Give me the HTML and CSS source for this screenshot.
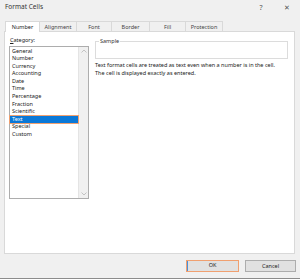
FILE: index.html
```html
<!DOCTYPE html>
<html>
<head>
<meta charset="utf-8">
<link rel="stylesheet" href="styles.css">
</head>
<body>
<div class="dialog">
  <div class="titlebar">
    <span class="title">Format Cells</span>
    <span class="tb-btns"><span class="help">?</span><span class="close">✕</span></span>
  </div>
  <div class="tabs">
    <div class="tab active">Number</div>
    <div class="tab w37">Alignment</div>
    <div class="tab w35">Font</div>
    <div class="tab w38">Border</div>
    <div class="tab w36">Fill</div>
    <div class="tab w37">Protection</div>
  </div>
  <div class="panel">
    <div class="left">
      <div class="label"><u>C</u>ategory:</div>
      <div class="listbox">
        <div class="items">
          <div class="item">General</div>
          <div class="item">Number</div>
          <div class="item">Currency</div>
          <div class="item">Accounting</div>
          <div class="item">Date</div>
          <div class="item">Time</div>
          <div class="item">Percentage</div>
          <div class="item">Fraction</div>
          <div class="item">Scientific</div>
          <div class="item selected">Text</div>
          <div class="item">Special</div>
          <div class="item">Custom</div>
        </div>
        <div class="scrollbar">
          <svg class="arrow" width="6" height="4" viewBox="0 0 6 4"><path d="M0.5 3.5 L3 1 L5.5 3.5" fill="none" stroke="#b8b8b8" stroke-width="0.8"/></svg>
          <svg class="arrow" width="6" height="4" viewBox="0 0 6 4"><path d="M0.5 0.5 L3 3 L5.5 0.5" fill="none" stroke="#b8b8b8" stroke-width="0.8"/></svg>
        </div>
      </div>
    </div>
    <div class="right">
      <div class="sample"><span class="legend">Sample</span></div>
      <p class="desc">Text format cells are treated as text even when a number is in the cell.<br>The cell is displayed exactly as entered.</p>
    </div>
  </div>
  <div class="footer">
    <div class="btn ok">OK</div>
    <div class="btn cancel">Cancel</div>
  </div>
</div>
</body>
</html>
```
FILE: styles.css
```css
html, body {
  margin: 0;
  padding: 0;
}
body {
  width: 300px;
  height: 279px;
  background: #f0f0f0;
  font-family: "Noto Sans", "Open Sans", sans-serif;
  color: #222;
  overflow: hidden;
}
.dialog {
  width: 300px;
  height: 278px;
  border-bottom: 1px solid #8c8c8c;
  display: flex;
  flex-direction: column;
}
.titlebar {
  height: 21px;
  display: flex;
  justify-content: space-between;
  align-items: flex-start;
  padding: 2px 0 0 5px;
  box-sizing: border-box;
}
.title {
  font-size: 6.5px;
  color: #333;
}
.tb-btns {
  display: flex;
  font-size: 7px;
  color: #555;
  margin-top: 1px;
}
.help {
  width: 26px;
  text-align: center;
}
.close {
  width: 26px;
  text-align: center;
  font-size: 6.5px;
}
.tabs {
  display: flex;
  padding-left: 5px;
  height: 10px;
  position: relative;
  z-index: 1;
}
.tab {
  font-size: 5.5px;
  height: 10px;
  line-height: 10px;
  text-align: center;
  border: 1px solid #d9d9d9;
  border-left: none;
  border-bottom: none;
  box-sizing: border-box;
  color: #444;
}
.tab.active {
  width: 35px;
  background: #fff;
  border-left: 1px solid #d9d9d9;
  height: 11px;
  color: #222;
}
.w35 { width: 35px; }
.w36 { width: 36px; }
.w37 { width: 37px; }
.w38 { width: 38px; }
.panel {
  margin-left: 4px;
  width: 291px;
  height: 223px;
  box-sizing: border-box;
  background: #fff;
  border: 1px solid #d9d9d9;
  display: flex;
  padding: 5px 0 0 4px;
  gap: 6px;
}
.left {
  display: flex;
  flex-direction: column;
}
.label {
  font-size: 5.5px;
  height: 9px;
  line-height: 7px;
  padding-left: 1px;
}
.label u {
  text-decoration: underline;
}
.listbox {
  width: 80px;
  height: 153px;
  border: 1px solid #adadad;
  box-sizing: border-box;
  display: flex;
}
.items {
  flex: 1;
  padding-top: 0.5px;
}
.item {
  font-size: 5.5px;
  height: 7.6px;
  line-height: 7.6px;
  padding-left: 2px;
  color: #222;
}
.item.selected {
  background: #0a78d7;
  color: #fff;
  outline: 1.5px solid #f0a070;
  outline-offset: 0.5px;
  position: relative;
  margin-left: 0;
}
.scrollbar {
  width: 9px;
  background: #f0f0f0;
  border-left: 1px solid #e4e4e4;
  display: flex;
  flex-direction: column;
  justify-content: space-between;
  align-items: center;
  padding: 2px 0 2px 0;
}
.right {
  flex: 1;
  padding-right: 6px;
  display: flex;
  flex-direction: column;
}
.sample {
  margin-top: 4px;
  height: 18px;
  border: 1px solid #dcdcdc;
  box-sizing: border-box;
  position: relative;
}
.legend {
  position: absolute;
  top: -4px;
  left: 3px;
  background: #fff;
  padding: 0 1px;
  font-size: 5.5px;
  line-height: 7px;
  color: #333;
}
.desc {
  margin: 3px 0 0 0;
  font-size: 5.5px;
  line-height: 7.8px;
  color: #222;
}
.footer {
  flex: 1;
  display: flex;
  justify-content: flex-end;
  align-items: flex-start;
  padding: 6px 4px 0 0;
  gap: 6px;
}
.btn {
  height: 12px;
  box-sizing: border-box;
  background: #e1e1e1;
  border: 1px solid #adadad;
  font-size: 5.5px;
  line-height: 10px;
  text-align: center;
  color: #222;
}
.ok {
  width: 53px;
  border: 1.5px solid #f0a070;
  box-shadow: inset 1px 0 0 #4a90d9;
  line-height: 9px;
}
.cancel {
  width: 51px;
}
```
